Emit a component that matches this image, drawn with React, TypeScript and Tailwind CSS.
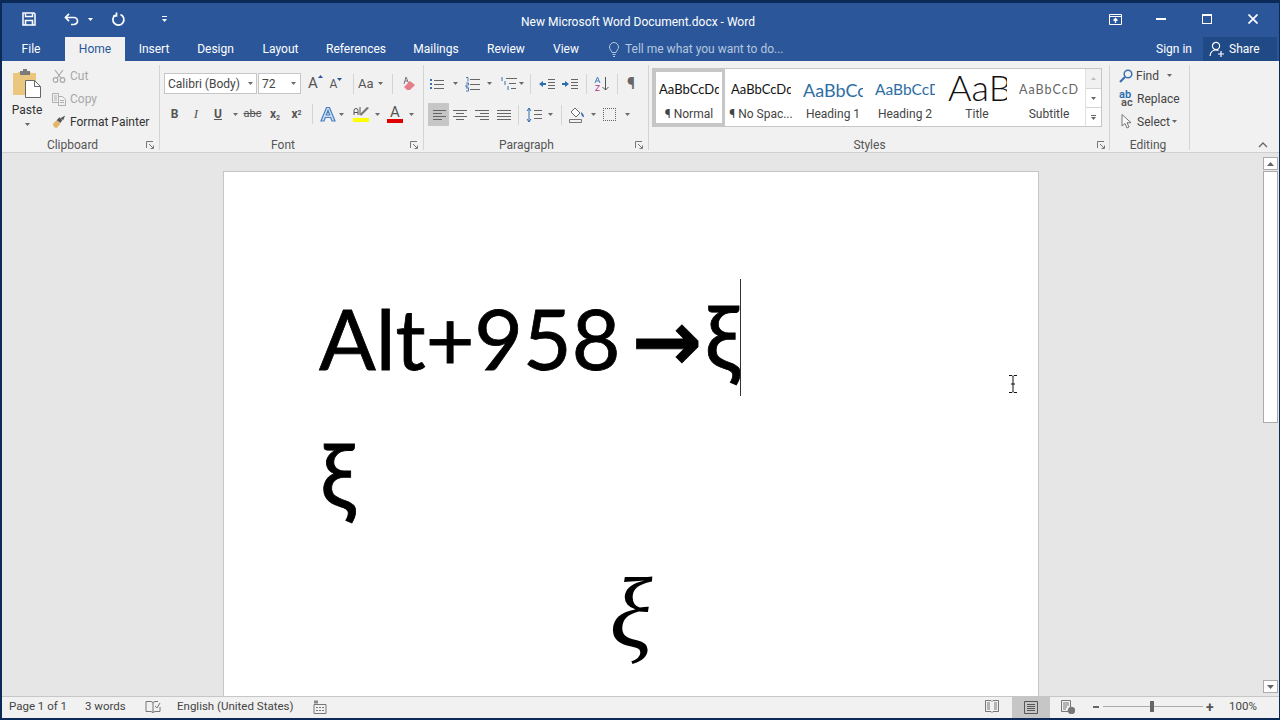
import React from "react";

const Caret = ({ c = "#6a6a6a", cls = "w-[12px]" }: { c?: string; cls?: string }) => (
  <span className={`${cls} h-[20px] flex items-center justify-center shrink-0`}>
    <svg width="5" height="3" viewBox="0 0 5 3"><path d="M0 0h5L2.5 3z" fill={c} /></svg>
  </span>
);
const Sep = ({ cls = "" }: { cls?: string }) => <span className={`w-px h-[20px] bg-[#d4d4d4] shrink-0 ${cls}`} />;
const I16 = ({ children, w = 16, h = 16 }: { children: React.ReactNode; w?: number; h?: number }) => (
  <svg width={w} height={h} viewBox={`0 0 ${w} ${h}`} className="shrink-0">{children}</svg>
);
const Launcher = () => (
  <svg width="8" height="8" viewBox="0 0 8 8"><path d="M.5 7V.5H7M3 3l4 4M4.5 7.5h3v-3" fill="none" stroke="#777" /></svg>
);
const Lines = ({ rows }: { rows: [number, number, number][] }) => (
  <I16>{rows.map(([x1, x2, y], i) => <path key={i} d={`M${x1} ${y + 0.5}H${x2}`} stroke="#666" />)}</I16>
);

const Tab = ({ t, cls }: { t: string; cls: string }) => (
  <div className={`${cls} h-full flex items-center justify-center text-white text-[12px]`}>{t}</div>
);

const Style = ({ s, l, cls, active }: { s: string; l: string; cls: string; active?: boolean }) => (
  <div className={`w-[72px] h-full shrink-0 flex flex-col items-center overflow-hidden border-[3px] ${active ? "border-[#c6c6c6]" : "border-transparent"}`}>
    <div className="mt-[3px] h-[30px] w-[60px] overflow-hidden flex items-center whitespace-nowrap font-['Lato',sans-serif]">
      <span className={cls}>{s}</span>
    </div>
    <div className="mt-[1px] text-[12px] text-[#444] whitespace-nowrap leading-[16px]">{l}</div>
  </div>
);

const GroupLabel = ({ t, launcher, cls, text }: { t: string; launcher?: boolean; cls: string; text: string }) => (
  <div className={`h-[16px] shrink-0 flex items-center text-[#555] text-[12px] ${cls}`}>
    <span className={`flex-1 text-center ${text}`}>{t}</span>
    {launcher && <span className="w-[8px] h-[8px] flex"><Launcher /></span>}
  </div>
);

export default function App() {
  return (
    <div className="w-[1280px] h-[720px] overflow-hidden bg-[#0b2a57] pt-[3px] pb-[2px] pl-[2px] pr-[1px] flex flex-col font-['Roboto',sans-serif]">
      {/* title bar */}
      <div className="h-[34px] bg-[#2b579a] flex items-center shrink-0 text-white">
        <div className="w-[178px] flex items-center h-full pb-[2px]">
          <span className="ml-[20px] w-[14px] flex">
            <svg width="14" height="14" viewBox="0 0 14 14" fill="none" stroke="#fff" strokeWidth="1.5"><path d="M1 1h11l1 1v11H1z" /><path d="M3.5 1.5v3h7v-3" /><path d="M3.5 13V8.5h7V13" strokeWidth="1.6" /></svg>
          </span>
          <span className="ml-[28px] w-[18px] flex">
            <svg width="16" height="14" viewBox="0 0 16 14" fill="none" stroke="#fff" strokeWidth="1.7"><path d="M1.5 5.5h8.5a3.5 3.5 0 0 1 0 7H7" /><path d="M5 1.8 1.5 5.5 5 9.2" /></svg>
          </span>
          <Caret c="#fff" cls="ml-[2px] w-[12px]" />
          <span className="ml-[15px] w-[16px] flex">
            <svg width="15" height="15" viewBox="0 0 15 15" fill="none" stroke="#fff" strokeWidth="1.7"><path d="M9.5 2.5a5.5 5.5 0 1 1-5 .4" /><path d="M3.5 .8v3.6h-3.4" transform="translate(2 -0.4)" /></svg>
          </span>
          <span className="ml-[33px] w-[8px] flex flex-col items-center gap-[2px]">
            <span className="w-[5px] h-px bg-white" />
            <svg width="5" height="3" viewBox="0 0 5 3"><path d="M0 0h5L2.5 3z" fill="#fff" /></svg>
          </span>
        </div>
        <div className="flex-1 text-center text-[12px] text-white pt-[3px]">New Microsoft Word Document.docx - Word</div>
        <div className="w-[183px] flex items-center h-full pb-[2px]">
          <span className="ml-[13px] flex">
            <svg width="13" height="11" viewBox="0 0 13 11" fill="none" stroke="#fff"><path d="M.5.5h12v10H.5z" /><path d="M.5 2.5h12" /><path d="M6.5 9V4.5M4.5 6.5l2-2 2 2" strokeWidth="1.3" /></svg>
          </span>
          <span className="ml-[34px] w-[10px] h-[2px] bg-white" />
          <span className="ml-[36px] w-[10px] h-[10px] border border-white border-t-[2px]" />
          <span className="ml-[36px] flex">
            <svg width="10" height="10" viewBox="0 0 10 10" stroke="#fff" strokeWidth="1.7"><path d="M.5.5l9 9M9.5.5l-9 9" /></svg>
          </span>
        </div>
      </div>
      {/* tabs */}
      <div className="h-[24px] bg-[#2b579a] flex items-stretch shrink-0">
        <Tab t="File" cls="w-[58px]" />
        <div className="ml-[5px] w-[60px] bg-[#f1f1f1] text-[#2b579a] text-[12px] flex items-center justify-center">Home</div>
        <Tab t="Insert" cls="w-[58px]" />
        <Tab t="Design" cls="w-[65px]" />
        <Tab t="Layout" cls="w-[65px]" />
        <Tab t="References" cls="w-[86px]" />
        <Tab t="Mailings" cls="w-[74px]" />
        <Tab t="Review" cls="w-[66px]" />
        <Tab t="View" cls="w-[54px]" />
        <div className="ml-[15px] flex items-center">
          <svg width="12" height="15" viewBox="0 0 12 15" fill="none" stroke="#b8c8de"><path d="M4 10.5C3.5 8.500 1.500 7.500 1.500 5a4.500 4.500 0 0 1 9 0C10.500 7.500 8.500 8.500 8 10.500z" /><path d="M4.500 12.500h3M5 14.500h2" /></svg>
          <span className="ml-[5px] text-[12px] text-[#b5c6de]">Tell me what you want to do...</span>
        </div>
        <div className="flex-1" />
        <div className="w-[64px] pl-[6px] h-full flex items-center justify-center text-white text-[12px]">Sign in</div>
        <div className="w-[74px] mr-[2px] bg-[#1f4a85] text-white text-[12px] flex items-center">
          <svg className="ml-[6px]" width="16" height="16" viewBox="0 0 16 16" fill="none" stroke="#fff" strokeWidth="1.2"><circle cx="7" cy="5" r="3.6" /><path d="M1 15c.4-3.600 2.500-6 6-6 1 0 1.800.2 2.500.6M9 13h6M12 10v6" /></svg>
          <span className="ml-[4px]">Share</span>
        </div>
      </div>
      {/* ribbon */}
      <div className="h-[92px] bg-[#f1f1f1] border-b border-[#d0d0d0] flex shrink-0 text-[#444] text-[12px] pt-[4px]">
        {/* clipboard */}
        <div className="w-[158px] h-[85px] border-r border-[#d4d4d4] flex flex-col shrink-0">
          <div className="h-[72px] shrink-0 flex">
            <div className="w-[50px] flex flex-col items-center">
              <svg className="mt-[3px]" width="30" height="32" viewBox="0 0 30 32">
                <path d="M1 5h5v-1h13v1h5v22H1z" fill="#eac67e" />
                <path d="M8 3h3V1h4v2h3v4H8z" fill="#7b7b7b" />
                <path d="M13.500 12.500h9l6 6v11h-15z" fill="#fff" stroke="#666" />
                <path d="M22.500 12.500v6h6" fill="none" stroke="#666" />
              </svg>
              <span className="mt-[2px] leading-[16px] text-[#333]">Paste</span>
              <svg className="mt-[5px]" width="5" height="3" viewBox="0 0 5 3"><path d="M0 0h5L2.500 3z" fill="#666" /></svg>
            </div>
            <div className="flex flex-col mt-[-1px]">
              {[
                ["Cut", "#a8a8a8"],
                ["Copy", "#a8a8a8"],
                ["Format Painter", "#333"],
              ].map(([t, c], i) => (
                <div key={t} className="h-[23px] flex items-center whitespace-nowrap" style={{ color: c }}>
                  <span className="w-[14px] h-[14px] flex mr-[4px]">
                    {i === 0 && <svg width="14" height="14" viewBox="0 0 14 14" fill="none" stroke="#a8a8a8" strokeWidth="1.200"><circle cx="3.500" cy="11" r="2.300" /><circle cx="10.500" cy="11" r="2.300" /><path d="M3 1l6 8M11 1L5 9" /></svg>}
                    {i === 1 && <svg width="14" height="14" viewBox="0 0 14 14" fill="#f1f1f1" stroke="#b0b0b0"><path d="M.5 1.500h6v9h-6zM2 4h3M2 6h3M2 8h3" /><path d="M6.500 4.500h4l3 3v6h-7zM8 8.500h4M8 10.500h4" /></svg>}
                    {i === 2 && <svg width="15" height="14" viewBox="0 0 15 14"><path d="M1 9l4-4 4 4-4 4.500C3 13.500 1 12 1 9z" fill="#e3b766" /><path d="M5 5l3-3 3 3-2 3z" fill="#555" /><path d="M9 3l5-3-2 5z" fill="#555" /></svg>}
                  </span>
                  <span>{t}</span>
                </div>
              ))}
            </div>
          </div>
          <GroupLabel t="Clipboard" launcher cls="pl-[3px] pr-[5px]" text="mr-[6px]" />
        </div>
        {/* font */}
        <div className="w-[264px] h-[85px] border-r border-[#d4d4d4] flex flex-col shrink-0 pl-[4px]">
          <div className="h-[72px] shrink-0 pt-[8px]">
            <div className="h-[21px] flex items-center">
              <div className="w-[93px] h-[21px] bg-white border border-[#c6c6c6] flex items-center pl-[3px] text-[#444] whitespace-nowrap">
                <span className="flex-1">Calibri (Body)</span><Caret cls="w-[11px]" />
              </div>
              <div className="ml-[1px] w-[43px] h-[21px] bg-white border border-[#c6c6c6] flex items-center pl-[3px]">
                <span className="flex-1">72</span><Caret cls="w-[13px]" />
              </div>
              <span className="w-[22px] ml-[1px] flex justify-center text-[15px] text-[#555] pl-[5px]">A<svg className="mt-[3px]" width="5" height="3" viewBox="0 0 5 3"><path d="M0 3h5L2.500 0z" fill="#2b579a" /></svg></span>
              <span className="w-[22px] flex justify-center text-[12px] text-[#555] pl-[2px]">A<svg className="mt-[3px]" width="5" height="3" viewBox="0 0 5 3"><path d="M0 0h5L2.500 3z" fill="#2b579a" /></svg></span>
              <Sep cls="ml-[7px]" />
              <span className="ml-[4px] text-[13px] text-[#555] w-[17px]">Aa</span>
              <Caret cls="w-[9px] ml-[1px]" />
              <Sep cls="ml-[7px]" />
              <span className="ml-[8px] flex">
                <svg width="15" height="15" viewBox="0 0 15 15"><path d="M3 8l2-7 3 7M4 5h3" fill="none" stroke="#777" /><path d="M3 11l6-6 5 4-5 5H6z" fill="#e57d8a" /></svg>
              </span>
            </div>
            <div className="h-[24px] mt-[8px] flex items-center text-[#555]">
              <span className="w-[21px] text-center font-bold">B</span>
              <span className="w-[22px] text-center italic font-['Liberation_Serif',serif] text-[13px]">I</span>
              <span className="w-[22px] text-center underline font-bold">U</span>
              <Caret cls="w-[12px]" />
              <span className="w-[23px] text-center line-through text-[11px]">abc</span>
              <span className="w-[22px] text-center font-bold">x<sub className="text-[7px]">2</sub></span>
              <span className="w-[21px] text-center font-bold">x<sup className="text-[7px]">2</sup></span>
              <Sep cls="ml-[5px]" />
              <span className="ml-[7px] flex">
                <svg width="16" height="16" viewBox="0 0 16 16" fill="#cfe0f4" stroke="#4a7fc0" strokeWidth="1.200"><path d="M1 15L6.500 1.500h3L15 15h-3l-1.300-3.500H5.300L4 15zM6.300 9h3.400L8 4.500z" /></svg>
              </span>
              <Caret cls="w-[12px] ml-[-1px]" />
              <span className="ml-[6px] w-[18px] flex">
                <svg width="18" height="16" viewBox="0 0 18 16"><path d="M1 9V4.500a2 2 0 0 1 4 0V9M1 6.500h4M7 1v8" fill="none" stroke="#555" /><path d="M8 10l8-8-2-1-7 7z" fill="#777" /><path d="M0 12h16v4H0z" fill="#ffff00" /></svg>
              </span>
              <Caret cls="w-[12px]" />
              <span className="ml-[3px] w-[18px] flex flex-col items-center">
                <span className="text-[15px] leading-[14px] text-[#555]">A</span>
                <span className="w-[16px] h-[4px] bg-[#e00000]" />
              </span>
              <Caret cls="w-[10px] ml-[2px]" />
            </div>
          </div>
          <GroupLabel t="Font" launcher cls="pr-[5px]" text="mr-[8px]" />
        </div>
        {/* paragraph */}
        <div className="w-[225px] h-[85px] border-r border-[#d4d4d4] flex flex-col shrink-0 pl-[4px]">
          <div className="h-[72px] shrink-0 pt-[8px]">
            <div className="h-[21px] flex items-center">
              <span className="w-[18px] ml-[1px] flex"><I16><path d="M1 3h2v2H1zM1 7h2v2H1zM1 11h2v2H1z" fill="#3a6eb0" /><path d="M5 4.500h10M5 8.500h10M5 12.500h10" stroke="#666" /></I16></span>
              <Caret cls="w-[12px] ml-[2px]" />
              <span className="w-[16px] ml-[4px] flex"><I16><path d="M5 3.500h10M5 8.500h10M5 13.500h10" stroke="#666" /><path d="M1 1.500h2v4M1 7h2.500v2H1v2h2.500M1 12h2.500v3H1" fill="none" stroke="#3a6eb0" strokeWidth=".9" /></I16></span>
              <Caret cls="w-[12px] ml-[2px]" />
              <span className="w-[16px] ml-[6px] flex"><I16><path d="M5 2.500h11M8 7.500h7M10 12.500h5" stroke="#666" /><path d="M1 1v4M4 5v4M7 10v4" stroke="#3a6eb0" /></I16></span>
              <Caret cls="w-[8px]" />
              <Sep cls="ml-[5px]" />
              <span className="w-[16px] ml-[8px] flex"><I16><path d="M9 3.500h7M9 6.500h7M9 9.500h7M9 12.500h7" stroke="#666" /><path d="M0 8l4-3v2h3v2H4v2z" fill="#2b6cb0" /></I16></span>
              <span className="w-[16px] ml-[7px] flex"><I16><path d="M9 3.500h7M9 6.500h7M9 9.500h7M9 12.500h7" stroke="#666" /><path d="M7 8L3 5v2H0v2h3v2z" fill="#2b6cb0" /></I16></span>
              <Sep cls="ml-[8px]" />
              <span className="w-[16px] ml-[7px] flex"><I16><path d="M1 7l2.500-6L6 7M2 5h3" fill="none" stroke="#4a7fc0" /><path d="M1.500 9.500h4l-4 5h4" fill="none" stroke="#b44a9a" /><path d="M11.500 1v13M8.500 11l3 3 3-3" fill="none" stroke="#555" /></I16></span>
              <Sep cls="ml-[7px]" />
              <span className="text-[16px] ml-[9px] text-[#666] w-[13px] font-bold leading-[16px]">¶</span>
            </div>
            <div className="h-[23px] mt-[9px] flex items-center">
              <span className="w-[21px] h-[23px] bg-[#c6c6c6] rounded-[1px] flex items-center justify-center"><Lines rows={[[2, 15, 3], [2, 11, 6], [2, 15, 9], [2, 11, 12]]} /></span>
              <span className="w-[16px] ml-[3px] flex"><Lines rows={[[1, 15, 3], [4, 12, 6], [1, 15, 9], [4, 12, 12]]} /></span>
              <span className="w-[16px] ml-[6px] flex"><Lines rows={[[1, 15, 3], [6, 15, 6], [1, 15, 9], [6, 15, 12]]} /></span>
              <span className="w-[16px] ml-[6px] flex"><Lines rows={[[1, 15, 3], [1, 15, 6], [1, 15, 9], [1, 15, 12]]} /></span>
              <Sep cls="ml-[6px]" />
              <span className="w-[16px] ml-[7px] flex"><I16><path d="M3 1v14M1 4l2-3 2 3M1 12l2 3 2-3" fill="none" stroke="#2b6cb0" /><path d="M8 3.500h8M8 7.500h8M8 11.500h8" stroke="#666" /></I16></span>
              <Caret cls="w-[12px] ml-[2px]" />
              <Sep cls="ml-[5px]" />
              <span className="w-[17px] ml-[7px] flex"><svg width="17" height="16" viewBox="0 0 17 16"><path d="M6 1l5 5-4 4-5-5z" fill="#fff" stroke="#666" /><path d="M12 5c2 1 3 3 3 5-2 0-3-2-3-5z" fill="#3a6eb0" /><path d="M.5 12.500h12v3H.5z" fill="#f1f1f1" stroke="#777" /></svg></span>
              <Caret cls="w-[12px] ml-[1px]" />
              <span className="w-[13px] h-[13px] ml-[4px] border border-dotted border-[#666]" />
              <Caret cls="w-[12px] ml-[5px]" />
            </div>
          </div>
          <GroupLabel t="Paragraph" launcher cls="pr-[5px]" text="mr-[10px]" />
        </div>
        {/* styles */}
        <div className="w-[461px] h-[85px] border-r border-[#d4d4d4] flex flex-col shrink-0 pl-[3px]">
          <div className="h-[72px] shrink-0">
            <div className="h-[59px] w-[450px] mt-[3px] border border-[#c6c6c6] bg-white flex">
              <Style s="AaBbCcDdEe" l="¶ Normal" active cls="text-[13px] text-[#111]" />
              <Style s="AaBbCcDdEe" l="¶ No Spac..." cls="text-[13px] text-[#111]" />
              <Style s="AaBbCcDd" l="Heading 1" cls="text-[18px] text-[#2f6ea5]" />
              <Style s="AaBbCcDd" l="Heading 2" cls="text-[15.500px] text-[#2f6ea5]" />
              <Style s="AaB" l="Title" cls="text-[36px] font-light text-[#111] leading-[30px] mb-[7px] ml-[1px]" />
              <Style s="AaBbCcDd" l="Subtitle" cls="text-[12.500px] tracking-[1px] text-[#666]" />
              <div className="w-[16px] border-l border-[#e0e0e0] flex flex-col shrink-0">
                <span className="h-[19px] bg-[#f1f1f1] flex items-center justify-center"><svg width="5" height="3" viewBox="0 0 5 3"><path d="M0 3h5L2.500 0z" fill="#c0c0c0" /></svg></span>
                <span className="h-[20px] bg-white border-y border-[#d4d4d4] flex items-center justify-center"><svg width="5" height="3" viewBox="0 0 5 3"><path d="M0 0h5L2.500 3z" fill="#666" /></svg></span>
                <span className="flex-1 bg-white flex flex-col items-center justify-center gap-[1px]"><span className="w-[5px] h-px bg-[#666]" /><svg width="5" height="3" viewBox="0 0 5 3"><path d="M0 0h5L2.500 3z" fill="#666" /></svg></span>
              </div>
            </div>
          </div>
          <GroupLabel t="Styles" launcher cls="pr-[4px]" text="mr-[10px]" />
        </div>
        {/* editing */}
        <div className="w-[80px] h-[85px] border-r border-[#d4d4d4] flex flex-col shrink-0 pl-[9px]">
          <div className="h-[72px] shrink-0 text-[#444]">
            <div className="h-[23px] mt-[-1px] flex items-center">
              <svg className="mr-[3px]" width="14" height="14" viewBox="0 0 14 14" fill="none" stroke="#3a6eb0" strokeWidth="1.500"><circle cx="9" cy="5" r="3.800" /><path d="M6 8l-5 5" strokeWidth="2.200" /></svg>
              Find<Caret cls="w-[12px] ml-[5px]" />
            </div>
            <div className="h-[23px] flex items-center">
              <span className="w-[14px] mr-[4px] text-[11px] leading-[8px] text-[#2b6cb0] font-semibold flex flex-col">ab<span className="pl-[2px] text-[#555]">ac</span></span>
              Replace
            </div>
            <div className="h-[23px] flex items-center">
              <svg className="mr-[4px] ml-[2px]" width="12" height="15" viewBox="0 0 12 15" fill="#f8f8f8" stroke="#777"><path d="M1 .5v11.500l3-2.500 2 4.500 2-1-2-4.300h4z" /></svg>
              Select<Caret cls="w-[9px]" />
            </div>
          </div>
          <GroupLabel t="Editing" cls="pr-[12px]" text="" />
        </div>
        <div className="flex-1 flex items-end justify-end pr-[11px] pb-[4px]">
          <svg width="10" height="6" viewBox="0 0 10 6" fill="none" stroke="#666" strokeWidth="1.300"><path d="M1 5l4-4 4 4" /></svg>
        </div>
      </div>
      {/* doc */}
      <div className="flex-1 min-h-0 bg-[#e6e6e6] flex overflow-hidden relative">
        <div className="flex-1 overflow-hidden">
          <div className="relative ml-[221px] mt-[18px] w-[816px] h-[600px] bg-white border border-[#c6c6c6] pl-[95px] text-black font-['Lato',sans-serif] [-webkit-text-stroke:0.8px_#000]">
            <div className="h-[120px] mt-[103px] whitespace-nowrap text-[84px] leading-[120px] relative">
              <span>Alt+958</span>
              <span className="inline-block ml-[2px] w-[82px] pl-[7px] text-center font-['DejaVu_Sans',sans-serif] font-bold text-[84px]">→</span>
              <span className="text-[90px] leading-[120px]">ξ</span>
              <span className="absolute left-[421px] top-[4px] w-px h-[117px] bg-[#333]" />
            </div>
            <div className="h-[126px] mt-[15px] text-[90px] leading-[126px] ml-[1px]">ξ</div>
            <div className="mt-[17px] text-center pr-[95px] text-[100px] leading-[120px] italic font-['Liberation_Serif',serif] [-webkit-text-stroke:0px]">ξ</div>
          </div>
        </div>
        <div className="w-[17px] flex flex-col items-center pt-[4px] pb-[3px]">
          <span className="w-[15px] h-[13px] bg-white border border-[#ababab] flex items-center justify-center"><svg width="7" height="4" viewBox="0 0 7 4"><path d="M0 4h7L3.500 0z" fill="#666" /></svg></span>
          <span className="w-[15px] h-[252px] bg-white border border-[#ababab] mt-[1px]" />
          <span className="flex-1" />
          <span className="w-[15px] h-[13px] bg-white border border-[#ababab] flex items-center justify-center"><svg width="7" height="4" viewBox="0 0 7 4"><path d="M0 0h7L3.500 4z" fill="#666" /></svg></span>
        </div>
        <svg className="absolute left-[1006px] top-[222px]" width="10" height="18" viewBox="0 0 10 18" fill="none" stroke="#111"><path d="M1 .5h3l1 1 1-1h3M5 1.500v15M1 17.500h3l1-1 1 1h3M3 9h4" /></svg>
      </div>
      {/* status */}
      <div className="h-[22px] bg-[#f1f1f1] border-t border-[#c6c6c6] flex items-center shrink-0 text-[#444] text-[11.500px] pb-[2px]">
        <span className="ml-[7px] w-[76px]">Page 1 of 1</span>
        <span className="w-[60px]">3 words</span>
        <span className="w-[32px] flex">
          <svg width="16" height="14" viewBox="0 0 16 14" fill="none" stroke="#777"><path d="M1 1.500h5l2 1v10l-2-1H1zM8 2.500l2-1h3M8 12.500l2-1h5V7" /><path d="M10 6l2 2 3-5" /></svg>
        </span>
        <span className="w-[136px] whitespace-nowrap">English (United States)</span>
        <span className="flex">
          <svg width="14" height="14" viewBox="0 0 14 14"><path d="M1 .5h4v3H1z" fill="#888" /><path d="M1 4.500h12v9H1z" fill="none" stroke="#777" /><path d="M3 7h2v1H3zM6 7h2v1H6zM9 7h2v1H9zM3 10h2v1H3zM6 10h2v1H6zM9 10h2v1H9z" fill="#777" /></svg>
        </span>
        <div className="flex-1" />
        <span className="flex w-[14px] mr-[13px]">
          <svg width="14" height="13" viewBox="0 0 14 13" fill="#f1f1f1" stroke="#777"><path d="M.5.500h5.500l1 1 1-1h5.500v11H8l-1 1-1-1H.5zM2 3h3M2 5h3M2 7h3M2 9h3M9 3h3M9 5h3M9 7h3M9 9h3" /></svg>
        </span>
        <span className="w-[38px] h-[21px] mb-[-2px] bg-[#c6c6c6] flex items-center justify-center">
          <svg width="14" height="13" viewBox="0 0 14 13" fill="none" stroke="#555"><path d="M.5.500h13v12H.5zM3 3.500h8M3 5.500h8M3 7.500h8M3 9.500h8" /></svg>
        </span>
        <span className="w-[32px] ml-[11px] flex">
          <svg width="14" height="14" viewBox="0 0 14 14" fill="none" stroke="#777"><path d="M.5.500h9v11h-9zM2 3h6M2 5h6M2 7h4M2 9h3" /><circle cx="10.500" cy="10.500" r="3.300" fill="#777" /></svg>
        </span>
        <span className="w-[6px] h-[2px] bg-[#666]" />
        <span className="ml-[4px] w-[100px] h-px bg-[#aaa] relative shrink-0">
          <span className="absolute left-[47px] top-[-5px] w-[4px] h-[11px] bg-[#666]" />
        </span>
        <span className="ml-[3px] text-[14px] font-bold text-[#555] w-[23px] leading-[14px]">+</span>
        <span className="w-[30px] mr-[20px]">100%</span>
      </div>
    </div>
  );
}
